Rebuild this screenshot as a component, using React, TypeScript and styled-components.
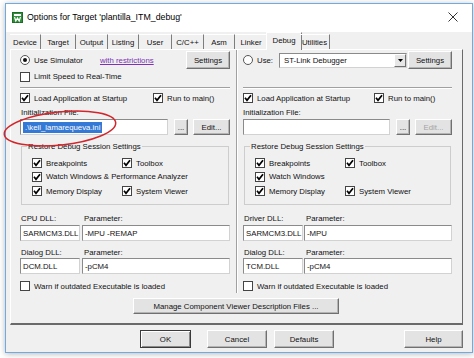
import React from "react";
import styled, { createGlobalStyle, css } from "styled-components";

const GlobalStyle = createGlobalStyle`
  html, body {
    margin: 0;
    padding: 0;
    background: #ffffff;
  }
  body {
    font-family: "Liberation Sans", Arial, sans-serif;
    font-size: 7.8px;
    color: #111;
  }
  * {
    box-sizing: border-box;
  }
`;

const tabs = [
  { name: "Device", w: 31 },
  { name: "Target", w: 35 },
  { name: "Output", w: 32 },
  { name: "Listing", w: 31 },
  { name: "User", w: 33 },
  { name: "C/C++", w: 32 },
  { name: "Asm", w: 31 },
  { name: "Linker", w: 33 },
  { name: "Debug", w: 32, active: true },
  { name: "Utilities", w: 30 },
];

function Check({ label, checked = true }: { label: string; checked?: boolean }) {
  return (
    <Opt>
      <Box>
        {checked && (
          <svg width="8" height="8" viewBox="0 0 8 8">
            <path d="M1 3.8 L3 6.3 L7 1.2" fill="none" stroke="#000" strokeWidth="1.7" />
          </svg>
        )}
      </Box>
      {label}
    </Opt>
  );
}

function Radio({ label, on }: { label: string; on?: boolean }) {
  return (
    <Opt>
      <Circle>{on && <Dot />}</Circle>
      {label}
    </Opt>
  );
}

function Group({ watch }: { watch: string }) {
  return (
    <GroupBox>
      <Legend>Restore Debug Session Settings</Legend>
      <GroupGrid>
        <Check label="Breakpoints" />
        <Check label="Toolbox" />
        <Wide>
          <Check label={watch} />
        </Wide>
        <Check label="Memory Display" />
        <Check label="System Viewer" />
      </GroupGrid>
    </GroupBox>
  );
}

type DllProps = {
  first: string;
  dll: string;
  param: string;
  dialog: string;
  dialogParam: string;
  gap: number;
};

function DllFields({ first, dll, param, dialog, dialogParam, gap }: DllProps) {
  return (
    <>
      <DllGrid $gap={gap} $top={7}>
        <Caption $pad={1}>{first}</Caption>
        <Caption $pad={2}>Parameter:</Caption>
      </DllGrid>
      <DllGrid $gap={gap} $top={1}>
        <Field>{dll}</Field>
        <Field>{param}</Field>
      </DllGrid>
      <DllGrid $gap={gap} $top={5}>
        <Caption $pad={1}>Dialog DLL:</Caption>
        <Caption $pad={2}>Parameter:</Caption>
      </DllGrid>
      <DllGrid $gap={gap} $top={0}>
        <Field>{dialog}</Field>
        <Field>{dialogParam}</Field>
      </DllGrid>
      <Row $h={14} $top={5}>
        <Check label="Warn if outdated Executable is loaded" checked={false} />
      </Row>
    </>
  );
}

export default function App() {
  return (
    <Page>
      <GlobalStyle />
      <Window>
        <TitleBar>
          <svg width="11" height="11" viewBox="0 0 11 11">
            <rect x="0" y="0" width="11" height="11" fill="#2f8f3a" />
            <rect x="0.5" y="0.5" width="10" height="10" fill="none" stroke="#1d6b27" />
            <rect x="2" y="2" width="7" height="2" fill="#ffffff" />
            <path d="M2.5 5 L3.8 9 L5.5 6 L7.2 9 L8.5 5" fill="none" stroke="#ffffff" strokeWidth="1.2" />
          </svg>
          <Title>Options for Target 'plantilla_ITM_debug'</Title>
          <Close>
            <svg width="10" height="10" viewBox="0 0 10 10">
              <path d="M0.5 0.5 L9.5 9.5 M9.5 0.5 L0.5 9.5" stroke="#333" strokeWidth="1" />
            </svg>
          </Close>
        </TitleBar>

        <Body>
          <TabStrip>
            {tabs.map((t) => (
              <Tab key={t.name} $w={t.w} $active={t.active}>
                {t.name}
              </Tab>
            ))}
          </TabStrip>

          <Panel>
            <Columns>
              <Column>
                <Row $h={20}>
                  <Radio label="Use Simulator" on />
                  <Link>with restrictions</Link>
                  <Btn $w={44} $h={18} $auto>
                    Settings
                  </Btn>
                </Row>
                <Row $h={13}>
                  <Check label="Limit Speed to Real-Time" checked={false} />
                </Row>
                <Rule />
                <LoadRow $first={133}>
                  <Check label="Load Application at Startup" />
                  <Check label="Run to main()" />
                </LoadRow>
                <Caption $pad={1} $h={10}>
                  Initialization File:
                </Caption>
                <FileRow>
                  <Field>
                    <Selected>.\keil_lamarequeva.ini</Selected>
                  </Field>
                  <Btn $w={14} $h={16}>
                    ...
                  </Btn>
                  <Btn $w={37} $h={16}>
                    Edit...
                  </Btn>
                </FileRow>
                <Group watch="Watch Windows & Performance Analyzer" />
                <DllFields
                  first="CPU DLL:"
                  dll="SARMCM3.DLL"
                  param="-MPU -REMAP"
                  dialog="DCM.DLL"
                  dialogParam="-pCM4"
                  gap={2}
                />
              </Column>

              <Divider />

              <Column>
                <Row $h={20}>
                  <Radio label="Use:" />
                  <Select>
                    <span>ST-Link Debugger</span>
                    <Arrow>
                      <svg width="5" height="3" viewBox="0 0 5 3">
                        <path d="M0 0 L5 0 L2.5 3 Z" fill="#000" />
                      </svg>
                    </Arrow>
                  </Select>
                  <Btn $w={44} $h={18} $auto>
                    Settings
                  </Btn>
                </Row>
                <Row $h={13} />
                <Rule />
                <LoadRow $first={131}>
                  <Check label="Load Application at Startup" />
                  <Check label="Run to main()" />
                </LoadRow>
                <Caption $pad={0} $h={10}>
                  Initialization File:
                </Caption>
                <FileRow>
                  <Field />
                  <Btn $w={14} $h={16}>
                    ...
                  </Btn>
                  <Btn $w={37} $h={16} $disabled>
                    Edit...
                  </Btn>
                </FileRow>
                <Group watch="Watch Windows" />
                <DllFields
                  first="Driver DLL:"
                  dll="SARMCM3.DLL"
                  param="-MPU"
                  dialog="TCM.DLL"
                  dialogParam="-pCM4"
                  gap={1}
                />
              </Column>
            </Columns>

            <ManageRow>
              <Btn $w={206} $h={16}>
                Manage Component Viewer Description Files ...
              </Btn>
            </ManageRow>
          </Panel>

          <ButtonRow>
            <Btn $w={51} $h={18} $ml={130} $default>
              OK
            </Btn>
            <Btn $w={60} $h={18} $ml={16}>
              Cancel
            </Btn>
            <Btn $w={60} $h={18} $ml={7}>
              Defaults
            </Btn>
            <Btn $w={59} $h={18} $auto>
              Help
            </Btn>
          </ButtonRow>
        </Body>
      </Window>

      <Annotation width="474" height="358" viewBox="0 0 474 358">
        <ellipse
          cx="60"
          cy="128.5"
          rx="56"
          ry="16.5"
          transform="rotate(-6 60 128.5)"
          fill="none"
          stroke="#d3262c"
          strokeWidth="1.5"
        />
      </Annotation>
    </Page>
  );
}

const Page = styled.div`
  position: relative;
  width: 474px;
  height: 358px;
  overflow: hidden;
  padding: 3px 0 0 5px;
`;

const Window = styled.div`
  width: 468px;
  height: 350px;
  border: 1px solid #72a9df;
  background: #f0f0f0;
  box-shadow: 0 1px 6px rgba(0, 0, 0, 0.28);
  display: flex;
  flex-direction: column;
`;

const TitleBar = styled.div`
  height: 28px;
  flex-shrink: 0;
  background: #ffffff;
  display: flex;
  align-items: center;
  padding: 0 14px 2px 6px;
`;

const Title = styled.span`
  margin-left: 4px;
  font-size: 8.8px;
  color: #000;
`;

const Close = styled.span`
  margin-left: auto;
  display: flex;
`;

const Body = styled.div`
  flex: 1;
  display: flex;
  flex-direction: column;
  padding: 0 9px 0 4px;
`;

const TabStrip = styled.div`
  height: 17px;
  display: flex;
  align-items: flex-end;
  position: relative;
  z-index: 1;
`;

const Tab = styled.div<{ $w: number; $active?: boolean }>`
  width: ${(p) => p.$w}px;
  height: 15px;
  display: flex;
  align-items: center;
  justify-content: center;
  border-right: 1px solid #7d7d7d;
  border-top: 1px solid #ffffff;
  white-space: nowrap;
  ${(p) =>
    p.$active &&
    css`
      width: ${p.$w + 4}px;
      height: 18px;
      margin: 0 -2px -1px -2px;
      padding-bottom: 3px;
      background: #f0f0f0;
      border-left: 1px solid #ffffff;
      border-top: 1px solid #ffffff;
    `}
`;

const Panel = styled.div`
  height: 276px;
  border: 1px solid;
  border-width: 1px 1px 2px 1px;
  border-color: #ffffff #6a6a6a #6a6a6a #ffffff;
  padding: 0 10px 0 9px;
  display: flex;
  flex-direction: column;
`;

const Columns = styled.div`
  display: grid;
  grid-template-columns: 210px 13px 209px;
`;

const Column = styled.div`
  display: flex;
  flex-direction: column;
`;

const Divider = styled.div`
  justify-self: center;
  width: 2px;
  border-left: 1px solid #a0a0a0;
  border-right: 1px solid #ffffff;
`;

const Row = styled.div<{ $h: number; $top?: number }>`
  display: flex;
  align-items: center;
  height: ${(p) => p.$h}px;
  margin-top: ${(p) => p.$top ?? 0}px;
  white-space: nowrap;
`;

const Opt = styled.span`
  display: inline-flex;
  align-items: center;
  gap: 4px;
  white-space: nowrap;
`;

const Box = styled.span`
  width: 10px;
  height: 10px;
  border: 1px solid #444;
  background: #ffffff;
  display: inline-flex;
  align-items: center;
  justify-content: center;
`;

const Circle = styled.span`
  width: 10px;
  height: 10px;
  border-radius: 50%;
  border: 1px solid #555;
  background: #ffffff;
  display: inline-flex;
  align-items: center;
  justify-content: center;
`;

const Dot = styled.span`
  width: 4px;
  height: 4px;
  border-radius: 50%;
  background: #111;
`;

const Link = styled.span`
  margin-left: 17px;
  color: #7b32b4;
  text-decoration: underline;
`;

const Btn = styled.div<{
  $w: number;
  $h: number;
  $ml?: number;
  $auto?: boolean;
  $disabled?: boolean;
  $default?: boolean;
}>`
  width: ${(p) => p.$w}px;
  height: ${(p) => p.$h}px;
  flex-shrink: 0;
  margin-left: ${(p) => (p.$auto ? "auto" : `${p.$ml ?? 0}px`)};
  display: flex;
  align-items: center;
  justify-content: center;
  background: #e3e3e3;
  border: 1px solid;
  border-color: #ffffff #707070 #707070 #ffffff;
  box-shadow: inset -1px -1px 0 #b4b4b4;
  color: ${(p) => (p.$disabled ? "#a3a3a3" : "#111")};
  white-space: nowrap;
  ${(p) =>
    p.$default &&
    css`
      border-color: #3a3a3a;
      box-shadow: inset 1px 1px 0 #ffffff, inset -1px -1px 0 #8a8a8a;
    `}
`;

const Rule = styled.div`
  margin-top: 4px;
  height: 2px;
  border-top: 1px solid #a0a0a0;
  border-bottom: 1px solid #ffffff;
`;

const LoadRow = styled.div<{ $first: number }>`
  display: grid;
  grid-template-columns: ${(p) => p.$first}px auto;
  align-items: center;
  height: 18px;
`;

const Caption = styled.div<{ $pad: number; $h?: number }>`
  padding-left: ${(p) => p.$pad}px;
  height: ${(p) => p.$h ?? 12}px;
  display: flex;
  align-items: center;
  white-space: nowrap;
`;

const FileRow = styled.div`
  display: flex;
  gap: 6px;
  margin-top: 2px;
  height: 16px;

  & > div:last-child {
    margin-left: -1px;
  }
`;

const Field = styled.div`
  flex: 1;
  height: 16px;
  min-width: 0;
  background: #ffffff;
  border: 1px solid;
  border-color: #8a8a8a #d2d2d2 #d2d2d2 #8a8a8a;
  display: flex;
  align-items: center;
  padding-left: 2px;
  white-space: nowrap;
  overflow: hidden;
`;

const Selected = styled.span`
  background: #3479d5;
  color: #ffffff;
  padding: 1px 2px;
`;

const Select = styled.div`
  margin-left: 6px;
  width: 128px;
  height: 15px;
  background: #ffffff;
  border: 1px solid;
  border-color: #8a8a8a #d2d2d2 #d2d2d2 #8a8a8a;
  display: flex;
  align-items: center;
  padding-left: 4px;
  white-space: nowrap;

  & > span:first-child {
    flex: 1;
  }
`;

const Arrow = styled.span`
  width: 12px;
  height: 13px;
  background: #e6e6e6;
  border: 1px solid;
  border-color: #ffffff #707070 #707070 #ffffff;
  display: flex;
  align-items: center;
  justify-content: center;
`;

const GroupBox = styled.div`
  margin: 11px 1px 0 1px;
  border: 1px solid #cdcdcd;
  padding: 0 0 6px 10px;
`;

const Legend = styled.div`
  width: fit-content;
  margin: -6px 0 0 -5px;
  padding: 0 1px;
  line-height: 11px;
  height: 11px;
  background: #f0f0f0;
  white-space: nowrap;
`;

const GroupGrid = styled.div`
  margin-top: 4px;
  display: grid;
  grid-template-columns: 90px auto;
  grid-auto-rows: 14px;
  align-items: center;
`;

const Wide = styled.div`
  grid-column: 1 / -1;
`;

const DllGrid = styled.div<{ $gap: number; $top: number }>`
  display: grid;
  grid-template-columns: 60px 1fr;
  column-gap: ${(p) => p.$gap}px;
  margin-top: ${(p) => p.$top}px;
`;

const ManageRow = styled.div`
  display: flex;
  justify-content: center;
  margin-top: 5px;
`;

const ButtonRow = styled.div`
  display: flex;
  margin-top: 5px;
`;

const Annotation = styled.svg`
  position: absolute;
  left: 0;
  top: 0;
  pointer-events: none;
`;
